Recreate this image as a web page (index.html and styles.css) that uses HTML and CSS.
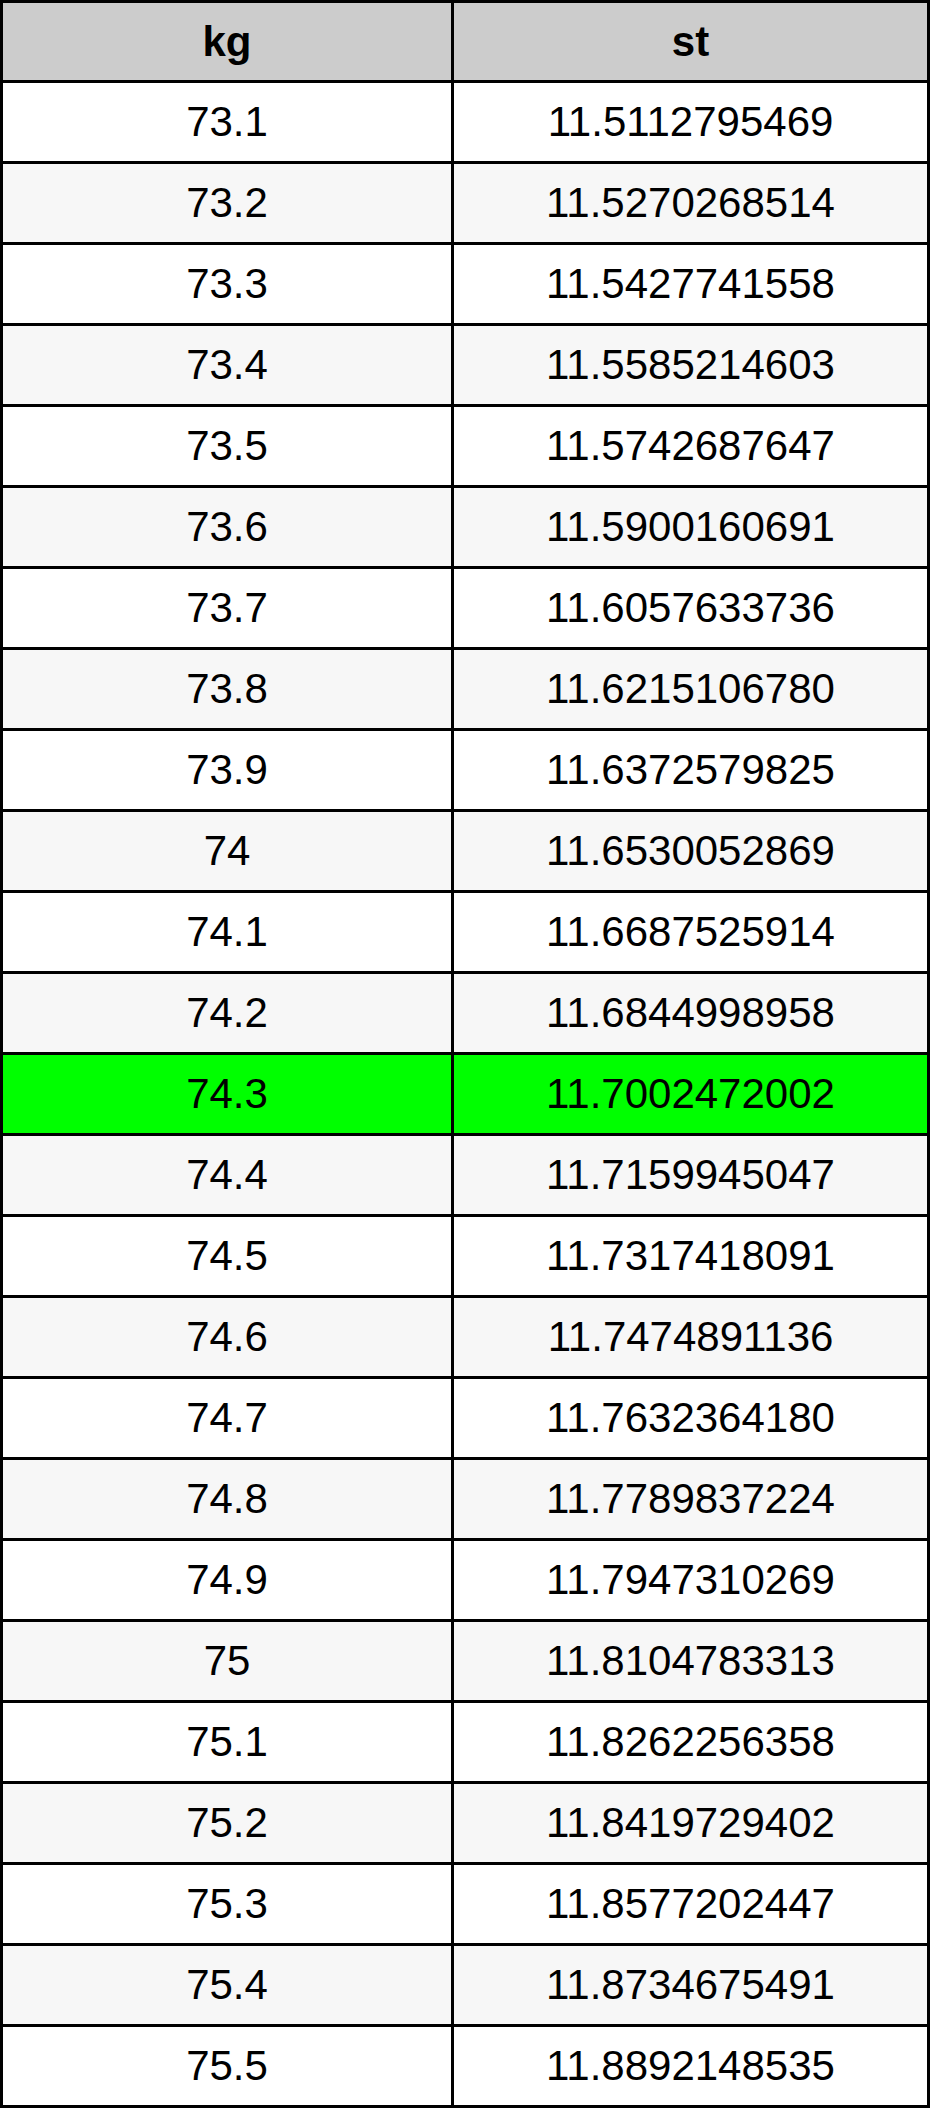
FILE: index.html
```html
<!DOCTYPE html>
<html>
<head>
<meta charset="utf-8">
<link rel="stylesheet" href="styles.css">
</head>
<body>
<table class="conv">
<colgroup><col class="c1"><col class="c2"></colgroup>
<thead>
<tr class="head"><th>kg</th><th>st</th></tr>
</thead>
<tbody>
<tr><td>73.1</td><td>11.5112795469</td></tr>
<tr><td>73.2</td><td>11.5270268514</td></tr>
<tr><td>73.3</td><td>11.5427741558</td></tr>
<tr><td>73.4</td><td>11.5585214603</td></tr>
<tr><td>73.5</td><td>11.5742687647</td></tr>
<tr><td>73.6</td><td>11.5900160691</td></tr>
<tr><td>73.7</td><td>11.6057633736</td></tr>
<tr><td>73.8</td><td>11.6215106780</td></tr>
<tr><td>73.9</td><td>11.6372579825</td></tr>
<tr><td>74</td><td>11.6530052869</td></tr>
<tr><td>74.1</td><td>11.6687525914</td></tr>
<tr><td>74.2</td><td>11.6844998958</td></tr>
<tr class="hl"><td>74.3</td><td>11.7002472002</td></tr>
<tr><td>74.4</td><td>11.7159945047</td></tr>
<tr><td>74.5</td><td>11.7317418091</td></tr>
<tr><td>74.6</td><td>11.7474891136</td></tr>
<tr><td>74.7</td><td>11.7632364180</td></tr>
<tr><td>74.8</td><td>11.7789837224</td></tr>
<tr><td>74.9</td><td>11.7947310269</td></tr>
<tr><td>75</td><td>11.8104783313</td></tr>
<tr><td>75.1</td><td>11.8262256358</td></tr>
<tr><td>75.2</td><td>11.8419729402</td></tr>
<tr><td>75.3</td><td>11.8577202447</td></tr>
<tr><td>75.4</td><td>11.8734675491</td></tr>
<tr><td>75.5</td><td>11.8892148535</td></tr>
</tbody>
</table>
</body>
</html>
```
FILE: styles.css
```css
html, body {
  margin: 0;
  padding: 0;
  background: #ffffff;
}
.conv {
  width: 930px;
  border: 3px solid #000;
  border-collapse: separate;
  border-spacing: 0;
  table-layout: fixed;
  font-family: "Liberation Sans", Arial, sans-serif;
  font-size: 42px;
  color: #000;
}
.c1 { width: 451px; }
.c2 { width: 473px; }
.conv th,
.conv td {
  padding: 0;
  text-align: center;
  vertical-align: middle;
}
.conv th:first-child,
.conv td:first-child {
  border-right: 3px solid #000;
}
.conv td {
  border-top: 3px solid #000;
  font-weight: normal;
}
.head {
  height: 77px;
  background: #cccccc;
}
.head th {
  font-weight: bold;
}
.conv tbody tr {
  height: 81px;
  background: #ffffff;
}
.conv tbody tr:nth-child(even) {
  background: #f7f7f7;
}
.conv tbody tr.hl {
  background: #00ff00;
}
```
